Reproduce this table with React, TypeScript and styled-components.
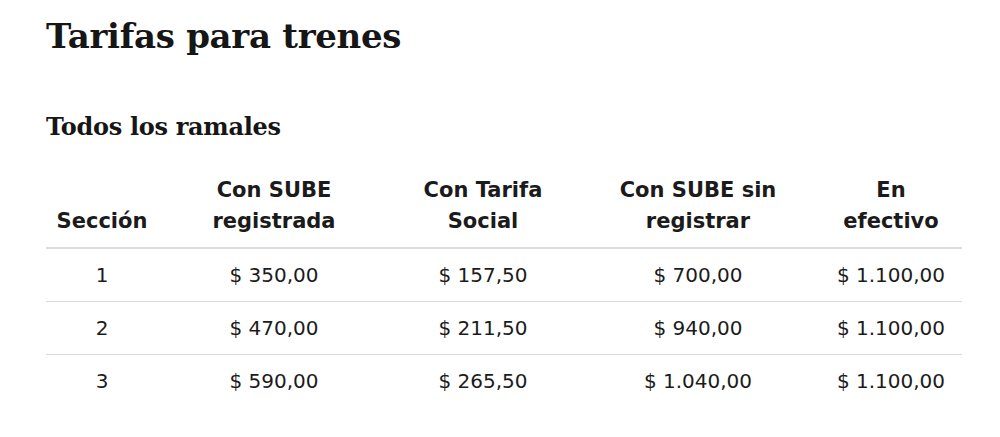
import React from "react";
import styled, { createGlobalStyle } from "styled-components";

const Global = createGlobalStyle`
  html, body { margin: 0; padding: 0; background: #fff; }
  body { font-family: "DejaVu Sans", sans-serif; color: #1b1b1b; }
`;

const Page = styled.main`
  padding: 13px 37px 0 46px;
`;

const Title = styled.h1`
  margin: 0;
  font-family: "DejaVu Serif", serif;
  font-weight: 700;
  font-size: 34px;
  line-height: 46px;
  color: #161616;
  letter-spacing: -0.3px;
`;

const Subtitle = styled.h2`
  margin: 52px 0 0;
  font-family: "DejaVu Serif", serif;
  font-weight: 700;
  font-size: 24px;
  line-height: 32px;
  color: #161616;
  letter-spacing: -0.3px;
`;

const Table = styled.table`
  margin-top: 32px;
  width: 916px;
  border-collapse: collapse;
  font-family: "DejaVu Sans", sans-serif;
  font-size: 20px;
  color: #1b1b1b;
`;

const Th = styled.th<{ $w: number }>`
  width: ${(p) => p.$w}px;
  font-weight: 700;
  font-size: 21px;
  line-height: 31px;
  padding: 0 0 10px;
  text-align: center;
  vertical-align: bottom;
  border-bottom: 2px solid #dcdcdc;
`;

const Row = styled.tr`
  & + & td { border-top: 1px solid #dcdcdc; }
`;

const Td = styled.td`
  text-align: center;
  height: 52px;
  padding: 0;
  line-height: 26px;
`;

const cols = [
  { label: ["Sección"], w: 112 },
  { label: ["Con SUBE", "registrada"], w: 232 },
  { label: ["Con Tarifa", "Social"], w: 186 },
  { label: ["Con SUBE sin", "registrar"], w: 244 },
  { label: ["En", "efectivo"], w: 142 },
];

const rows = [
  ["1", "$ 350,00", "$ 157,50", "$ 700,00", "$ 1.100,00"],
  ["2", "$ 470,00", "$ 211,50", "$ 940,00", "$ 1.100,00"],
  ["3", "$ 590,00", "$ 265,50", "$ 1.040,00", "$ 1.100,00"],
];

export default function App() {
  return (
    <>
      <Global />
      <Page>
        <Title>Tarifas para trenes</Title>
        <Subtitle>Todos los ramales</Subtitle>
        <Table>
          <thead>
            <tr>
              {cols.map((c, i) => (
                <Th key={i} $w={c.w}>
                  {c.label.map((l, j) => (
                    <React.Fragment key={j}>
                      {j > 0 && <br />}
                      {l}
                    </React.Fragment>
                  ))}
                </Th>
              ))}
            </tr>
          </thead>
          <tbody>
            {rows.map((r, i) => (
              <Row key={i}>
                {r.map((v, j) => (
                  <Td key={j}>{v}</Td>
                ))}
              </Row>
            ))}
          </tbody>
        </Table>
      </Page>
    </>
  );
}
